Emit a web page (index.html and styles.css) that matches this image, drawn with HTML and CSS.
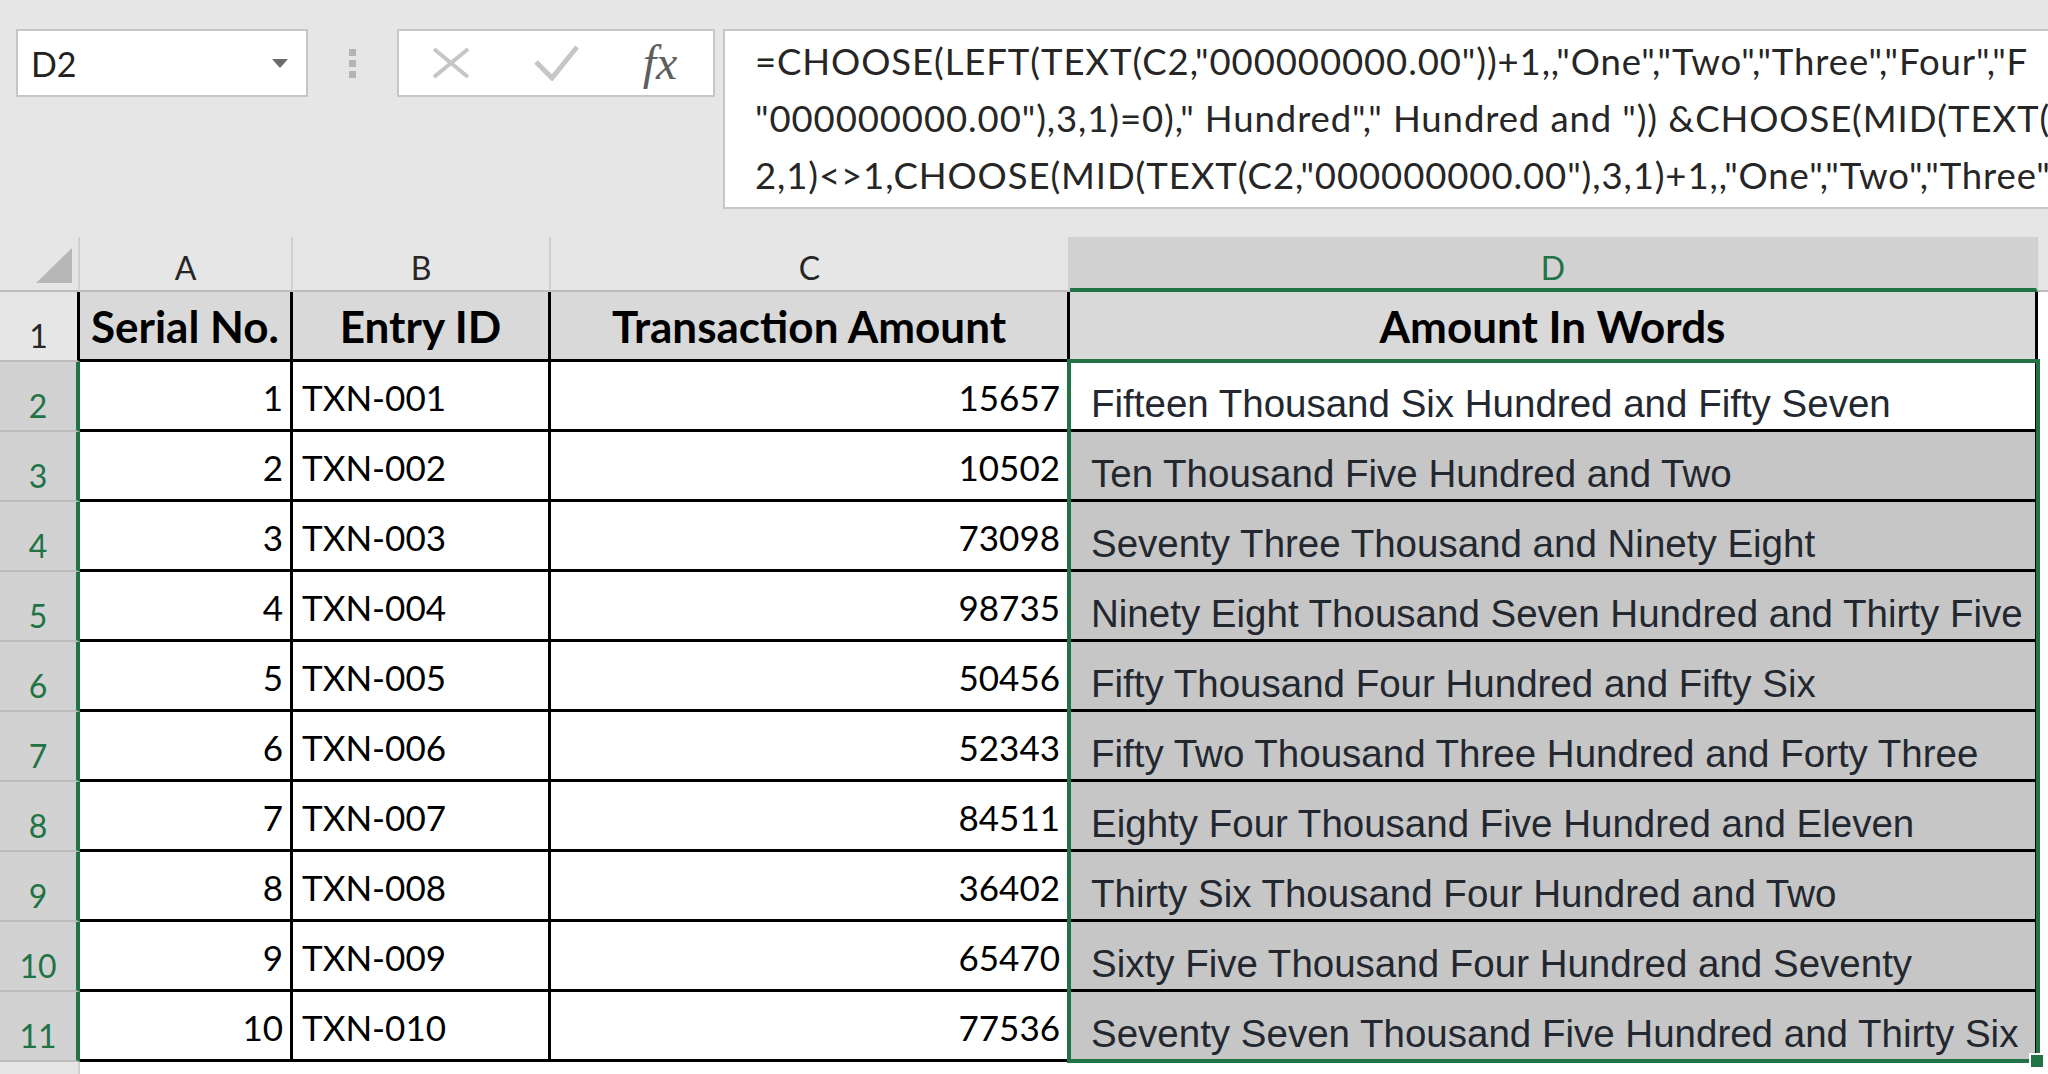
FILE: index.html
```html
<!DOCTYPE html>
<html lang="en">
<head>
    <meta charset="UTF-8">
    <meta name="viewport" content="width=device-width, initial-scale=1.0">
    <title>Amount In Words</title>
    <link rel="stylesheet" href="styles.css">
</head>
<body>
    <div class="formula-bar">
        <div class="name-box">
            <span>D2</span>
            <span class="drop-arrow"></span>
        </div>
        <div class="grip"><i></i><i></i><i></i></div>
        <div class="fx-buttons">
            <svg class="icon" width="40" height="34" viewBox="0 0 40 34">
                <path d="M3 3 L37 31 M37 3 L3 31" stroke="#c6c6c6" stroke-width="4" fill="none"/>
            </svg>
            <svg class="icon" width="46" height="36" viewBox="0 0 46 36">
                <polyline points="2,17 18,33 43,2" stroke="#c6c6c6" stroke-width="5" fill="none"/>
            </svg>
            <span class="fx">fx</span>
        </div>
        <div class="formula">
            <div>=CHOOSE(LEFT(TEXT(C2,"000000000.00"))+1,,"One","Two","Three","Four","F</div>
            <div>"000000000.00"),3,1)=0)," Hundred"," Hundred and ")) &amp;CHOOSE(MID(TEXT(C</div>
            <div>2,1)&lt;&gt;1,CHOOSE(MID(TEXT(C2,"000000000.00"),3,1)+1,,"One","Two","Three"</div>
        </div>
    </div>

    <div class="sheet">
        <!-- column headers -->
        <div class="corner">
            <svg width="36" height="35" viewBox="0 0 36 35"><polygon points="36,0 36,35 0,35" fill="#b7b7b7"/></svg>
        </div>
        <div class="col-head">A</div>
        <div class="col-head">B</div>
        <div class="col-head">C</div>
        <div class="col-head active">D</div>
        <div class="col-head rest"></div>

        <!-- row 1 -->
        <div class="row-head">1</div>
        <div class="cell title">Serial No.</div>
        <div class="cell title">Entry ID</div>
        <div class="cell title">Transaction Amount</div>
        <div class="cell title">Amount In Words</div>
        <div class="blank"></div>

        <div class="row-head sel">2</div>
        <div class="cell num">1</div>
        <div class="cell">TXN-001</div>
        <div class="cell num">15657</div>
        <div class="cell words">Fifteen Thousand Six Hundred and Fifty Seven</div>
        <div class="blank"></div>

        <div class="row-head sel">3</div>
        <div class="cell num">2</div>
        <div class="cell">TXN-002</div>
        <div class="cell num">10502</div>
        <div class="cell words hl">Ten Thousand Five Hundred and Two</div>
        <div class="blank"></div>

        <div class="row-head sel">4</div>
        <div class="cell num">3</div>
        <div class="cell">TXN-003</div>
        <div class="cell num">73098</div>
        <div class="cell words hl">Seventy Three Thousand and Ninety Eight</div>
        <div class="blank"></div>

        <div class="row-head sel">5</div>
        <div class="cell num">4</div>
        <div class="cell">TXN-004</div>
        <div class="cell num">98735</div>
        <div class="cell words hl">Ninety Eight Thousand Seven Hundred and Thirty Five</div>
        <div class="blank"></div>

        <div class="row-head sel">6</div>
        <div class="cell num">5</div>
        <div class="cell">TXN-005</div>
        <div class="cell num">50456</div>
        <div class="cell words hl">Fifty Thousand Four Hundred and Fifty Six</div>
        <div class="blank"></div>

        <div class="row-head sel">7</div>
        <div class="cell num">6</div>
        <div class="cell">TXN-006</div>
        <div class="cell num">52343</div>
        <div class="cell words hl">Fifty Two Thousand Three Hundred and Forty Three</div>
        <div class="blank"></div>

        <div class="row-head sel">8</div>
        <div class="cell num">7</div>
        <div class="cell">TXN-007</div>
        <div class="cell num">84511</div>
        <div class="cell words hl">Eighty Four Thousand Five Hundred and Eleven</div>
        <div class="blank"></div>

        <div class="row-head sel">9</div>
        <div class="cell num">8</div>
        <div class="cell">TXN-008</div>
        <div class="cell num">36402</div>
        <div class="cell words hl">Thirty Six Thousand Four Hundred and Two</div>
        <div class="blank"></div>

        <div class="row-head sel">10</div>
        <div class="cell num">9</div>
        <div class="cell">TXN-009</div>
        <div class="cell num">65470</div>
        <div class="cell words hl">Sixty Five Thousand Four Hundred and Seventy</div>
        <div class="blank"></div>

        <div class="row-head sel">11</div>
        <div class="cell num">10</div>
        <div class="cell">TXN-010</div>
        <div class="cell num">77536</div>
        <div class="cell words hl">Seventy Seven Thousand Five Hundred and Thirty Six</div>
        <div class="blank"></div>

        <!-- row 12, cut off -->
        <div class="row-head end"></div>
        <div class="blank"></div>
        <div class="blank"></div>
        <div class="blank"></div>
        <div class="blank"></div>
        <div class="blank"></div>

        <div class="selection"></div>
        <div class="fill-handle"></div>
    </div>
</body>
</html>
```

FILE: styles.css
```css
body {
    margin: 0;
    width: 2048px;
    height: 1074px;
    overflow: hidden;
    background-color: #e6e6e6;
    font-family: Lato, "Open Sans", sans-serif;
}

/* formula bar */
.formula-bar {
    display: flex;
    align-items: flex-start;
    height: 237px;
    padding: 29px 0 0 16px;
    box-sizing: border-box;
}
.name-box {
    width: 292px;
    height: 68px;
    box-sizing: border-box;
    border: 2px solid #c6c6c6;
    background-color: #fff;
    display: flex;
    align-items: center;
    justify-content: space-between;
    padding: 0 18px 0 13px;
    font-size: 34px;
    color: #222;
}
.drop-arrow {
    width: 0;
    height: 0;
    border-left: 8px solid transparent;
    border-right: 8px solid transparent;
    border-top: 9px solid #6b6b6b;
}
.grip {
    width: 89px;
    height: 68px;
    display: flex;
    flex-direction: column;
    align-items: center;
    justify-content: center;
    gap: 4px;
}
.grip i {
    width: 7px;
    height: 7px;
    background-color: #b4b4b4;
}
.fx-buttons {
    width: 318px;
    height: 68px;
    box-sizing: border-box;
    border: 2px solid #c6c6c6;
    background-color: #fff;
    display: flex;
    align-items: center;
    justify-content: space-around;
}
.fx {
    font-family: "Liberation Serif", serif;
    font-style: italic;
    font-size: 48px;
    color: #5e5e5e;
    line-height: 1;
    margin-right: 4px;
}
.formula {
    flex: 1;
    height: 180px;
    margin-left: 8px;
    box-sizing: border-box;
    border: 2px solid #c6c6c6;
    border-right: none;
    background-color: #fff;
    padding: 2px 0 0 30px;
    font-size: 36.5px;
    letter-spacing: 0.9px;
    line-height: 57px;
    color: #262626;
    white-space: nowrap;
    overflow: hidden;
}

/* worksheet */
.sheet {
    position: relative;
    display: grid;
    grid-template-columns: 80px 213px 258px 519px 968px 1fr;
    grid-template-rows: 55px repeat(11, 70px) 1fr;
    height: 837px;
}
.sheet > div {
    box-sizing: border-box;
    display: flex;
    align-items: flex-end;
    line-height: 1;
    white-space: nowrap;
}
.corner {
    background-color: #e6e6e6;
    border-right: 2px solid #d0d0d0;
    border-bottom: 2px solid #bcbcbc;
    justify-content: flex-end;
    padding: 0 6px 7px 0;
}
.col-head {
    background-color: #e6e6e6;
    border-right: 2px solid #d0d0d0;
    border-bottom: 2px solid #bcbcbc;
    justify-content: center;
    font-size: 32px;
    color: #262626;
    padding-bottom: 6px;
}
.col-head.active {
    background-color: #d2d2d2;
    color: #217346;
    border-bottom: 4px solid #217346;
    padding-bottom: 4px;
}
.col-head.rest {
    border-right: none;
}
.row-head {
    background-color: #e6e6e6;
    border-right: 3px solid #000;
    border-bottom: 2px solid #bdbdbd;
    justify-content: center;
    font-size: 32px;
    color: #262626;
    padding-bottom: 8px;
}
.row-head.sel {
    background-color: #d2d2d2;
    color: #217346;
    border-right: 4px solid #217346;
}
.row-head.end {
    border-right: 2px solid #d0d0d0;
    border-bottom: none;
}
.cell {
    background-color: #fff;
    border-right: 3px solid #000;
    border-bottom: 3px solid #000;
    font-size: 35px;
    color: #000;
    padding: 0 7px 14px 9px;
}
.cell.num {
    justify-content: flex-end;
}
.cell.title {
    background-color: #d9d9d9;
    justify-content: center;
    font-weight: bold;
    font-size: 44px;
    padding: 0 0 11px 0;
}
.cell.words {
    font-family: "Liberation Sans", Arial, sans-serif;
    font-size: 38.5px;
    color: #232830;
    padding: 0 0 6px 21px;
}
.cell.words.hl {
    background-color: #c6c6c6;
}
.blank {
    background-color: #fff;
}

/* selected range D2:D11 */
.selection {
    position: absolute;
    left: 1067px;
    top: 122px;
    width: 973px;
    height: 704px;
    box-sizing: border-box;
    border: 4px solid #217346;
}
.fill-handle {
    position: absolute;
    left: 2029px;
    top: 816px;
    width: 16px;
    height: 16px;
    box-sizing: border-box;
    border: 2px solid #fff;
    background-color: #217346;
}
```
